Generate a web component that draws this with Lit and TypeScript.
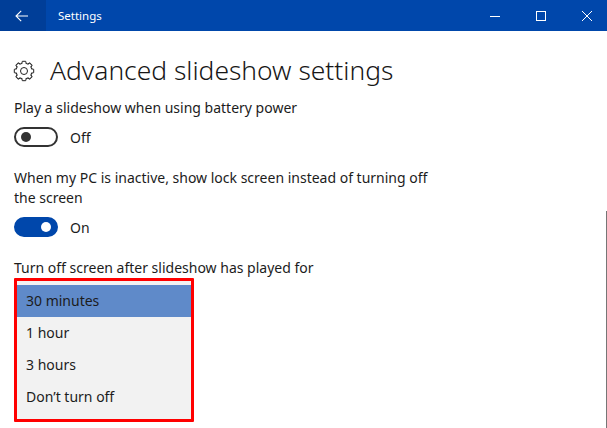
import { LitElement, html, css, svg } from 'lit';
import { customElement } from 'lit/decorators.js';

const options = ['30 minutes', '1 hour', '3 hours', "Don\u2019t turn off"];

@customElement('app-root')
export class AppRoot extends LitElement {
  static styles = css`
    :host {
      display: block;
      position: relative;
      width: 607px;
      height: 428px;
      overflow: hidden;
      background: #fff;
      color: #1c1c1c;
      font-family: 'Noto Sans', sans-serif;
      font-size: 14px;
    }
    .titlebar {
      display: flex;
      align-items: center;
      height: 31px;
      margin-right: -3px;
      background: #0047ab;
      color: #fff;
      font-size: 11.5px;
    }
    .back {
      display: flex;
      align-items: center;
      justify-content: center;
      width: 46px;
      height: 31px;
      padding-right: 2px;
      box-sizing: border-box;
      background: #003e98;
    }
    .app-name {
      flex: 1;
      margin-left: 12px;
    }
    .win {
      display: flex;
      align-items: center;
      justify-content: center;
      width: 46px;
      height: 31px;
    }
    .content {
      display: flex;
      flex-direction: column;
      align-items: flex-start;
      padding: 0 14px;
    }
    .heading {
      display: flex;
      align-items: center;
      gap: 15px;
      height: 54px;
      margin-top: 13px;
      margin-left: -1px;
      font-size: 26.4px;
      font-weight: 300;
      color: #171717;
    }
    .heading span {
      margin-top: -2px;
    }
    .label {
      line-height: 20px;
      width: 430px;
    }
    .toggle-row {
      display: flex;
      align-items: center;
      gap: 12px;
      height: 20px;
      margin: 9px 0 21px;
    }
    .switch {
      display: flex;
      align-items: center;
      box-sizing: border-box;
      width: 44px;
      height: 20px;
      padding: 0 5px;
      border: 2px solid #333;
      border-radius: 10px;
    }
    .switch i {
      width: 10px;
      height: 10px;
      border-radius: 50%;
      background: #333;
    }
    .switch.on {
      justify-content: flex-end;
      border-color: #0047ab;
      background: #0047ab;
    }
    .switch.on i {
      background: #fff;
    }
    .menu {
      box-sizing: border-box;
      width: 180px;
      height: 144px;
      border: 3px solid #f00;
      background: #f2f2f2;
      padding-top: 4px;
      border-radius: 1px;
    }
    .option {
      display: flex;
      align-items: center;
      box-sizing: border-box;
      height: 32px;
      padding: 0 0 2px 9px;
    }
    .option.sel {
      background: #5f8ac9;
    }
    .scroll {
      position: absolute;
      right: 0;
      top: 211px;
      bottom: 0;
      width: 1px;
      background: #767676;
    }
  `;

  private gear() {
    const teeth = [0, 45, 90, 135, 180, 225, 270, 315];
    return html`<svg width="22" height="22" viewBox="0 0 22 22" fill="none" stroke="#222" stroke-width="1">
      ${teeth.map((a) => svg`<path transform="rotate(${a} 11 11)" d="M8.8 3.6 L9.3 1.3 H12.7 L13.2 3.6"></path>`)}
      ${[22.5, 67.5, 112.5, 157.5, 202.5, 247.5, 292.5, 337.5].map(
        (a) => svg`<path transform="rotate(${a} 11 11)" d="M9.6 2.9 Q11 3.5 12.4 2.9"></path>`,
      )}
      <circle cx="11" cy="11" r="3.5"></circle>
    </svg>`;
  }

  render() {
    return html`
      <div class="titlebar">
        <div class="back">
          <svg width="14" height="12" viewBox="0 0 14 12" fill="none" stroke="#fff" stroke-width="1.1">
            <path d="M13 6H1M6.2 .8 1 6l5.2 5.2"></path>
          </svg>
        </div>
        <div class="app-name">Settings</div>
        <div class="win">
          <svg width="10" height="10" viewBox="0 0 10 10" stroke="#fff"><path d="M0 5.5h10"></path></svg>
        </div>
        <div class="win">
          <svg width="10" height="10" viewBox="0 0 10 10" fill="none" stroke="#fff"><rect x=".5" y=".5" width="9" height="9"></rect></svg>
        </div>
        <div class="win">
          <svg width="10" height="10" viewBox="0 0 10 10" stroke="#fff"><path d="M0 0l10 10M10 0 0 10"></path></svg>
        </div>
      </div>
      <div class="content">
        <div class="heading">${this.gear()}<span>Advanced slideshow settings</span></div>
        <div class="label">Play a slideshow when using battery power</div>
        <div class="toggle-row"><div class="switch"><i></i></div>Off</div>
        <div class="label">When my PC is inactive, show lock screen instead of turning off the screen</div>
        <div class="toggle-row"><div class="switch on"><i></i></div>On</div>
        <div class="label">Turn off screen after slideshow has played for</div>
        <div class="menu">
          ${options.map((o, i) => html`<div class="option ${i === 0 ? 'sel' : ''}">${o}</div>`)}
        </div>
      </div>
      <div class="scroll"></div>
    `;
  }
}
